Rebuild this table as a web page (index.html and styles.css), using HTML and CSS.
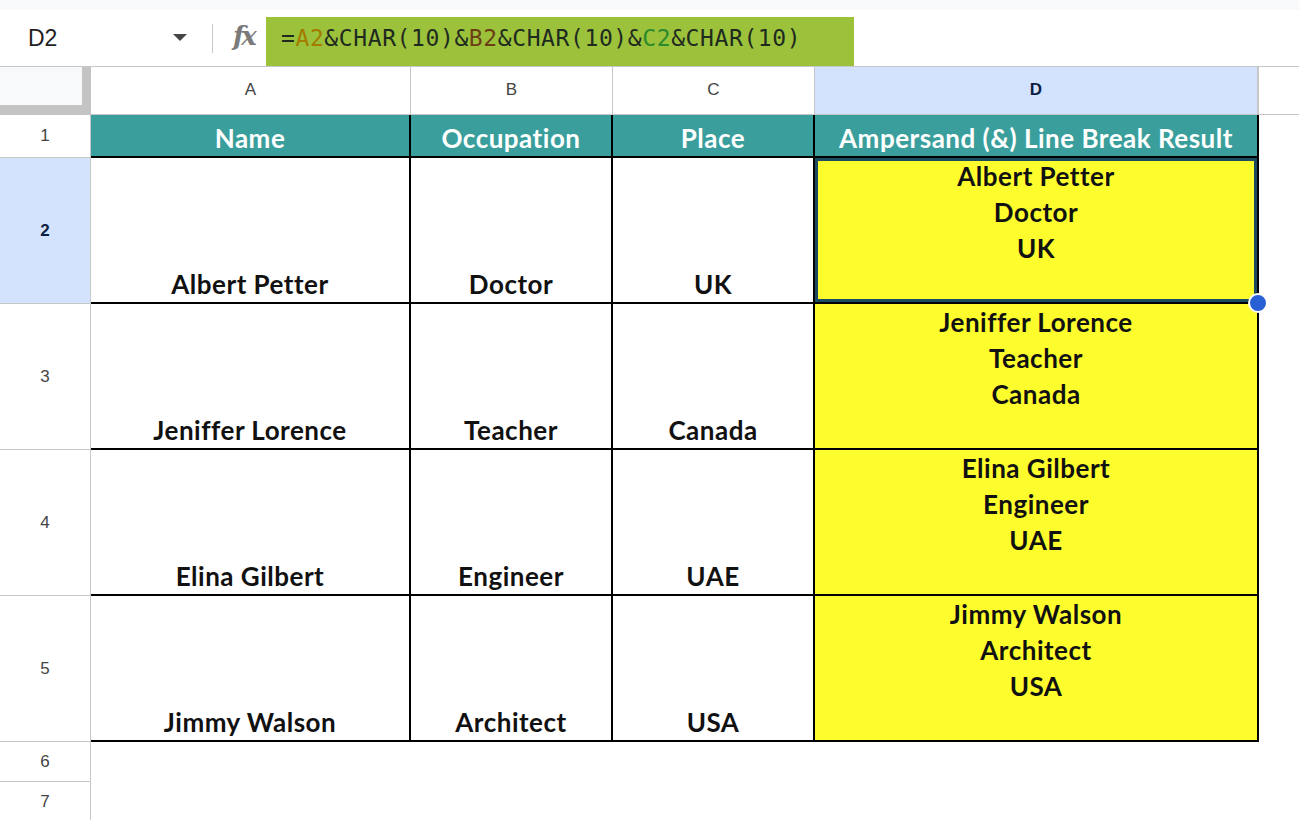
FILE: index.html
```html
<!DOCTYPE html>
<html>
<head>
<meta charset="utf-8">
<link rel="stylesheet" href="styles.css">
</head>
<body>
<div class="topstrip"></div>
<div class="fbar">
  <div class="namebox">D2</div>
  <div class="caret"></div>
  <div class="vsep"></div>
  <div class="fx">fx</div>
  <div class="formula">=<span class="ra">A2</span>&amp;CHAR(10)&amp;<span class="rb">B2</span>&amp;CHAR(10)&amp;<span class="rc">C2</span>&amp;CHAR(10)</div>
</div>
<div class="sheet">
  <div class="corner"></div>
  <div class="colh">A</div>
  <div class="colh">B</div>
  <div class="colh">C</div>
  <div class="colh sel">D</div>
  <div class="colh rest"></div>

  <div class="rowh">1</div>
  <div class="th first">Name</div>
  <div class="th">Occupation</div>
  <div class="th">Place</div>
  <div class="th">Ampersand (&amp;) Line Break Result</div>
  <div class="blank"></div>

  <div class="rowh sel">2</div>
  <div class="td first">Albert Petter</div>
  <div class="td">Doctor</div>
  <div class="td">UK</div>
  <div class="res active">Albert Petter<br>Doctor<br>UK<span class="handle"></span></div>
  <div class="blank"></div>

  <div class="rowh">3</div>
  <div class="td first">Jeniffer Lorence</div>
  <div class="td">Teacher</div>
  <div class="td">Canada</div>
  <div class="res">Jeniffer Lorence<br>Teacher<br>Canada</div>
  <div class="blank"></div>

  <div class="rowh">4</div>
  <div class="td first">Elina Gilbert</div>
  <div class="td">Engineer</div>
  <div class="td">UAE</div>
  <div class="res">Elina Gilbert<br>Engineer<br>UAE</div>
  <div class="blank"></div>

  <div class="rowh">5</div>
  <div class="td first">Jimmy Walson</div>
  <div class="td">Architect</div>
  <div class="td">USA</div>
  <div class="res">Jimmy Walson<br>Architect<br>USA</div>
  <div class="blank"></div>

  <div class="rowh">6</div>
  <div class="empty"></div>
  <div class="rowh">7</div>
  <div class="empty"></div>
</div>
</body>
</html>
```

FILE: styles.css
```css
* { box-sizing: border-box; }
html, body { margin: 0; padding: 0; background: #fff; }
body { width: 1299px; height: 820px; overflow: hidden; font-family: "Liberation Sans", Arial, sans-serif; }

.topstrip { height: 10px; background: #f8f9fa; }

.fbar {
  height: 57px;
  display: flex;
  align-items: stretch;
  border-bottom: 1px solid #c7c7c7;
}
.namebox {
  width: 160px;
  padding-left: 28px;
  font-size: 23px;
  color: #1f1f1f;
  display: flex;
  align-items: center;
}
.caret {
  width: 0; height: 0;
  border-left: 7px solid transparent;
  border-right: 7px solid transparent;
  border-top: 7px solid #444;
  align-self: center;
  margin-left: 13px;
  margin-bottom: 2px;
}
.vsep {
  width: 1px;
  background: #c7c7c7;
  margin: 14px 0 13px 25px;
}
.fx {
  font-family: "DejaVu Serif", "Liberation Serif", serif;
  font-style: italic;
  font-weight: 700;
  font-size: 26px;
  color: #7a7a7a;
  margin-left: 20px;
  width: 33px;
  display: flex;
  align-items: center;
  letter-spacing: -3px;
  padding-bottom: 4px;
}
.formula {
  margin: 7px 0 0 0;
  width: 588px;
  height: 49px;
  background: #9cc23c;
  font-family: "DejaVu Sans Mono", "Liberation Mono", monospace;
  font-size: 23px;
  letter-spacing: 0.6px;
  color: #1f2a1f;
  padding: 0 0 8px 15px;
  display: flex;
  align-items: center;
}
.ra { color: #a37b00; }
.rb { color: #6b3f14; }
.rc { color: #2c8a2c; }

.sheet {
  display: grid;
  grid-template-columns: 91px 320px 202px 202px 444px 1fr;
  grid-template-rows: 48px 43px 146px 146px 146px 146px 40px 40px;
}

.corner {
  background: #f8f9fa;
  border-right: 9px solid #c4c4c4;
  border-bottom: 10px solid #c4c4c4;
}
.colh {
  border-right: 1px solid #c7c7c7;
  border-bottom: 1px solid #c7c7c7;
  display: flex;
  align-items: center;
  justify-content: center;
  font-size: 17px;
  color: #444;
  padding-bottom: 2px;
}
.colh.sel { background: #d3e3fd; color: #0b1e42; font-weight: 700; border-right: 2px solid #c7c7c7; }
.colh.rest { border-right: none; }

.rowh {
  border-right: 1px solid #c7c7c7;
  border-bottom: 1px solid #c7c7c7;
  display: flex;
  align-items: center;
  justify-content: center;
  font-size: 17px;
  color: #444;
}
.rowh.sel { background: #d3e3fd; color: #0b1e42; font-weight: 700; }

.th, .td, .res {
  font-family: Lato, "Open Sans", sans-serif;
  font-weight: 700;
  font-size: 26px;
  letter-spacing: 0.5px;
  text-align: center;
  border-right: 2px solid #000;
  border-bottom: 2px solid #000;
}
.th {
  background: #3a9f9c;
  color: #fff;
  display: flex;
  align-items: center;
  justify-content: center;
  padding-top: 4px;
}
.td {
  color: #111;
  display: flex;
  align-items: flex-end;
  justify-content: center;
  padding-bottom: 2px;
}
.res {
  background: #fdfd2e;
  color: #111;
  line-height: 36px;
  position: relative;
}
.res.active {
  box-shadow: inset 0 0 0 3px #1b4c62;
  z-index: 2;
}
.handle {
  position: absolute;
  right: -11px;
  bottom: -11px;
  width: 20px;
  height: 20px;
  border-radius: 50%;
  background: #2a60d6;
  border: 2px solid #fff;
}
.blank { }
.empty { grid-column: 2 / span 5; }
```
